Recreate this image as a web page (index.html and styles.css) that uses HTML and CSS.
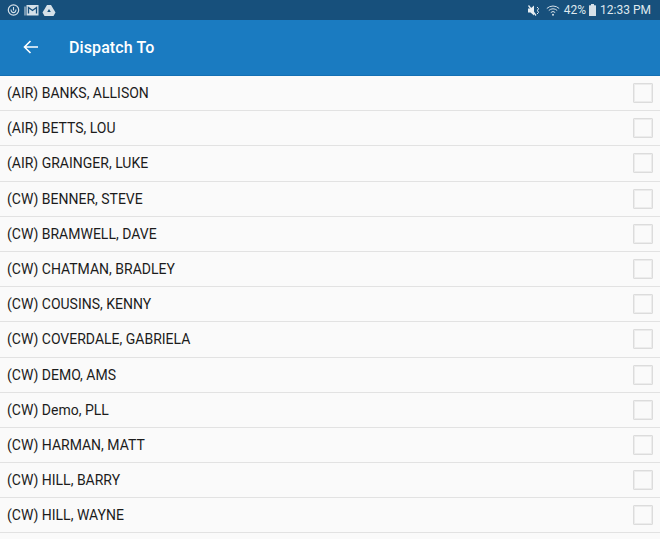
FILE: index.html
```
<!DOCTYPE html>
<html lang="en">
<head>
<meta charset="utf-8">
<title>Dispatch To</title>
<link rel="stylesheet" href="styles.css">
</head>
<body>
<div class="status">
  <div class="status-left">
    <svg class="ic" width="14" height="14" viewBox="0 0 14 14"><circle cx="6.5" cy="7" r="5.2" fill="none" stroke="#d5e0e8" stroke-width="1.2"/><path d="M4.2 6.5a2.4 2.4 0 1 0 4.6 0M6.5 4v3.5" fill="none" stroke="#d5e0e8" stroke-width="1.1"/></svg>
    <svg class="ic" width="15" height="13" viewBox="0 0 15 13"><path d="M0.5 2.5h1v9h-1z" fill="#d5e0e8"/><path d="M2.5 1h12v10.5h-12z" fill="#d5e0e8"/><path d="M4.5 9.5V3.5L8.5 6.5L12.5 3.5V9.5" fill="none" stroke="#17507c" stroke-width="1.3"/></svg>
    <svg class="ic" width="14" height="13" viewBox="0 0 14 13"><path d="M5 1h4l4.5 7.5-2 3.5h-9l-2-3.500z" fill="#d5e0e8"/><path d="M7 5l1.800 3H5.200z" fill="#17507c"/></svg>
  </div>
  <div class="status-right">
    <svg width="14" height="13" viewBox="0 0 14 13"><path d="M1 4.500h2.500L7 1.500v10L3.500 8.500H1z" fill="#e6edf2"/><path d="M1.500 1.500L9 11.500" stroke="#e6edf2" stroke-width="1.300"/><path d="M10 3l1.500 1.500-1 2 1 2L10 10" fill="none" stroke="#e6edf2"/></svg>
    <svg class="wifi" width="14" height="13" viewBox="0 0 14 13"><path d="M0.800 4.500a9 9 0 0 1 12.400 0M2.800 6.500a6 6 0 0 1 8.400 0M4.800 8.500a3.200 3.200 0 0 1 4.400 0" fill="none" stroke="#d5e0e8" stroke-width="1"/><circle cx="7" cy="10.800" r="1" fill="#d5e0e8"/></svg>
    <span class="pct">42%</span>
    <svg width="7" height="12" viewBox="0 0 7 12"><path d="M2 0h3v1.200h1.500a.5.500 0 0 1 .5.500V11.500a.5.500 0 0 1-.5.500H.5a.5.500 0 0 1-.5-.500V1.700a.5.500 0 0 1 .5-.500H2z" fill="#d5e0e8"/></svg>
    <span class="time">12:33 PM</span>
  </div>
</div>
<header class="appbar">
  <svg class="back" width="16" height="14" viewBox="0 0 16 14"><path d="M15 7H2M7.500 1L1.500 7l6 6" fill="none" stroke="#fff" stroke-width="1.600"/></svg>
  <h1 class="title">Dispatch To</h1>
</header>
<ul class="list">
  <li class="row"><span>(AIR) BANKS, ALLISON</span><i class="box"></i></li>
  <li class="row"><span>(AIR) BETTS, LOU</span><i class="box"></i></li>
  <li class="row"><span>(AIR) GRAINGER, LUKE</span><i class="box"></i></li>
  <li class="row"><span>(CW) BENNER, STEVE</span><i class="box"></i></li>
  <li class="row"><span>(CW) BRAMWELL, DAVE</span><i class="box"></i></li>
  <li class="row"><span>(CW) CHATMAN, BRADLEY</span><i class="box"></i></li>
  <li class="row"><span>(CW) COUSINS, KENNY</span><i class="box"></i></li>
  <li class="row"><span>(CW) COVERDALE, GABRIELA</span><i class="box"></i></li>
  <li class="row"><span>(CW) DEMO, AMS</span><i class="box"></i></li>
  <li class="row"><span>(CW) Demo, PLL</span><i class="box"></i></li>
  <li class="row"><span>(CW) HARMAN, MATT</span><i class="box"></i></li>
  <li class="row"><span>(CW) HILL, BARRY</span><i class="box"></i></li>
  <li class="row"><span>(CW) HILL, WAYNE</span><i class="box"></i></li>
</ul>
</body>
</html>
```
FILE: styles.css
```
* { box-sizing: border-box; }
html, body { margin: 0; height: 100%; overflow: hidden; }
body { background: #fafafa; font-family: Roboto, "Liberation Sans", sans-serif; color: #1c1c1c; }
.status { height: 20px; background: #17507c; display: flex; align-items: center; justify-content: space-between; padding: 0 9px 0 7px; color: #dfe8ee; }
.status-left, .status-right { display: flex; align-items: center; }
.status-left { gap: 3px; }
.status-right { gap: 3px; font-size: 12px; }
.wifi { margin-left: 2px; }
.pct { margin-left: 1px; }
.time { margin-left: 1px; }
.appbar { height: 56px; background: #1a7bc1; border-bottom: 1px solid #1470b4; display: flex; align-items: center; padding-left: 23px; }
.back { flex: none; margin-top: -1px; }
.title { margin: 0 0 0 30px; font-size: 16px; font-weight: 500; color: #fff; letter-spacing: .1px; }
.list { margin: 0; padding: 0; list-style: none; }
.row { height: 35.2px; display: flex; align-items: center; justify-content: space-between; padding: 0 7px; font-size: 14px; border-bottom: 1px solid #e2e2e2; }
.box { width: 20px; height: 20px; border: 1px solid #dcdcdc; border-radius: 1px; background: #fafafa; box-shadow: inset 0 0 0 1px #ececec; }
```
